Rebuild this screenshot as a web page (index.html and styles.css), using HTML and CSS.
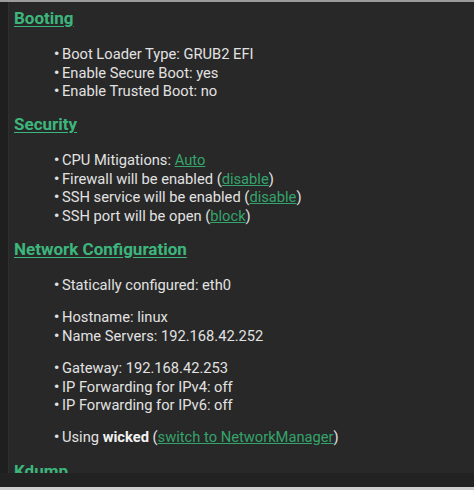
FILE: index.html
```html
<!DOCTYPE html>
<html>
<head>
<meta charset="utf-8">
<link rel="stylesheet" href="styles.css">
</head>
<body>
<div class="frame">
  <div class="topbar"></div>
  <div class="middle">
    <div class="strip"></div>
    <div class="content">
      <h2 class="heading"><a href="#">Booting</a></h2>
      <ul class="list">
        <li>Boot Loader Type: GRUB2 EFI</li>
        <li>Enable Secure Boot: yes</li>
        <li>Enable Trusted Boot: no</li>
      </ul>
      <h2 class="heading"><a href="#">Security</a></h2>
      <ul class="list">
        <li>CPU Mitigations: <a href="#">Auto</a></li>
        <li>Firewall will be enabled (<a href="#">disable</a>)</li>
        <li>SSH service will be enabled (<a href="#">disable</a>)</li>
        <li>SSH port will be open (<a href="#">block</a>)</li>
      </ul>
      <h2 class="heading"><a href="#">Network Configuration</a></h2>
      <ul class="list">
        <li>Statically configured: eth0</li>
      </ul>
      <ul class="list">
        <li>Hostname: linux</li>
        <li>Name Servers: 192.168.42.252</li>
      </ul>
      <ul class="list">
        <li>Gateway: 192.168.42.253</li>
        <li>IP Forwarding for IPv4: off</li>
        <li>IP Forwarding for IPv6: off</li>
      </ul>
      <ul class="list">
        <li>Using <b>wicked</b> (<a href="#">switch to NetworkManager</a>)</li>
      </ul>
      <h2 class="heading"><a href="#">Kdump</a></h2>
    </div>
  </div>
  <div class="bottombar"></div>
  <div class="bottomline"></div>
</div>
</body>
</html>
```

FILE: styles.css
```css
html, body {
  margin: 0;
  padding: 0;
  background: #282828;
}
.frame {
  width: 474px;
  height: 490px;
  display: flex;
  flex-direction: column;
  overflow: hidden;
  font-family: Roboto, "Liberation Sans", sans-serif;
}
.topbar {
  height: 2px;
  background: #9c9c9c;
  flex: none;
}
.middle {
  flex: 1;
  display: flex;
  overflow: hidden;
  background: #282828;
}
.strip {
  width: 8px;
  flex: none;
  background: #1f1f1f;
  border-right: 1px solid #2f2f2f;
}
.content {
  padding: 6px 0 0 5px;
  color: #e2e2e2;
  font-size: 14.7px;
  line-height: 18.5px;
}
.heading {
  margin: 0 0 17px;
  font-size: 17px;
  line-height: 20px;
  font-weight: 700;
}
.heading a {
  color: #3cb67c;
  text-decoration: underline;
  text-underline-offset: 2px;
}
.list {
  margin: 0 0 13.75px;
  padding-left: 49px;
  list-style: none;
}
.list li::before {
  content: "\2022";
  display: inline-block;
  width: 8px;
  margin-left: -9px;
  font-weight: 700;
}
.list + .heading {
  margin-top: 4.25px;
}
.list a {
  color: #34a46c;
  text-decoration: underline;
}
.list b {
  color: #f2f2f2;
  font-weight: 700;
}
.bottombar {
  height: 14px;
  flex: none;
  background: #222222;
}
.bottomline {
  height: 3px;
  flex: none;
  background: #cfcfcf;
}
```
